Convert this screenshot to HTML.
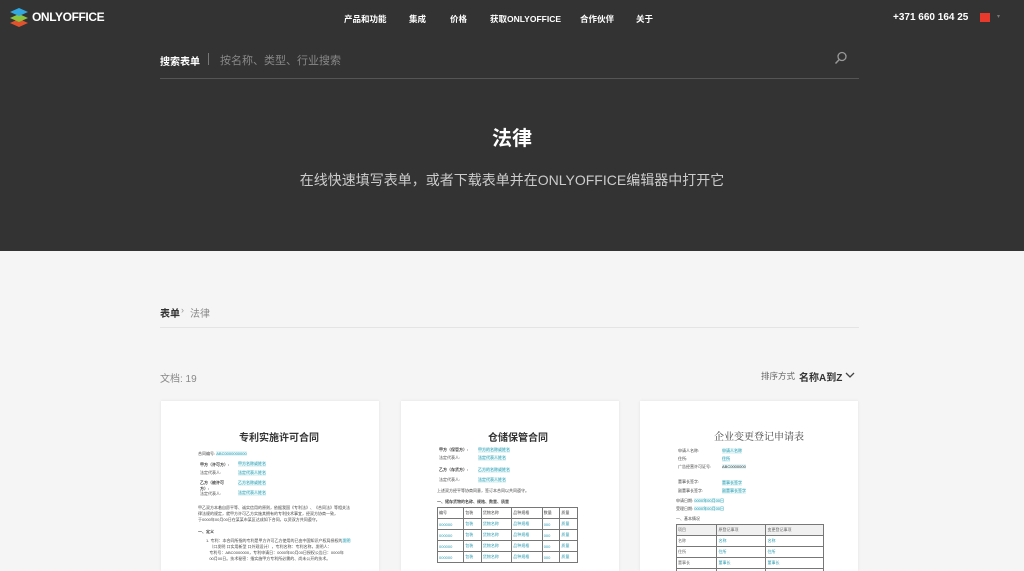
<!DOCTYPE html>
<html><head><meta charset="utf-8"><style>
*{margin:0;padding:0;box-sizing:border-box}
body{width:1024px;height:566px;overflow:hidden;background:#f5f5f5;font-family:"Liberation Sans","Noto Sans CJK SC",sans-serif;position:relative}
.hdr{position:absolute;left:0;top:0;width:1024px;height:251px;background:#333}
.a{position:absolute;white-space:nowrap}
.nav{color:#fff;font-size:8.5px;font-weight:bold;top:13px}
.card{position:absolute;top:401px;width:218px;height:170px;background:#fff;box-shadow:0 0 3px rgba(0,0,0,.08);overflow:hidden}
.t{position:absolute;white-space:nowrap;font-size:4px;color:#444}
.c{color:#2a9ab0;background:#e4f6f8}
table{position:absolute;border-collapse:collapse;font-size:4px}
td{border:0.6px solid #777;height:11px;padding:0 1px;color:#2a9ab0}
</style></head><body>
<div class="hdr"></div>
<svg class="a" style="left:9px;top:8px" width="20" height="19" viewBox="0 0 20 19"><path d="M10 11l9 4-9 4-9-4z" fill="#e2532d"/><path d="M10 6l9 4-9 4-9-4z" fill="#8bc53f"/><path d="M10 0l9 4-9 4-9-4z" fill="#33a8e0"/></svg>
<div class="a" style="left:32px;top:10px;color:#fff;font-size:12px;font-weight:bold;letter-spacing:-.4px">ONLYOFFICE</div>
<div class="a nav" style="left:344px">产品和功能</div>
<div class="a nav" style="left:409px">集成</div>
<div class="a nav" style="left:450px">价格</div>
<div class="a nav" style="left:490px">获取ONLYOFFICE</div>
<div class="a nav" style="left:580px">合作伙伴</div>
<div class="a nav" style="left:636px">关于</div>
<div class="a" style="left:893px;top:12px;color:#fff;font-size:10px;font-weight:bold">+371 660 164 25</div>
<div class="a" style="left:980px;top:13px;width:10px;height:9px;background:#e8392c"></div>
<div class="a" style="left:997px;top:13px;color:#777;font-size:6px">▾</div>
<div class="a" style="left:160px;top:53px;color:#fff;font-size:10px;font-weight:bold">搜索表单</div>
<div class="a" style="left:208px;top:53px;width:1px;height:12px;background:#777"></div>
<div class="a" style="left:220px;top:52px;color:#888;font-size:11px">按名称、类型、行业搜索</div>
<svg class="a" style="left:834px;top:51px" width="14" height="14" viewBox="0 0 14 14"><circle cx="8" cy="5.5" r="4" fill="none" stroke="#999" stroke-width="1.3"/><path d="M5.3 8.5L1.5 12.5" stroke="#999" stroke-width="1.5"/></svg>
<div class="a" style="left:160px;top:78px;width:699px;height:1px;background:#555"></div>
<div class="a" style="left:0;width:1024px;top:122px;text-align:center;color:#fff;font-size:20px;font-weight:bold">法律</div>
<div class="a" style="left:0;width:1024px;top:170px;text-align:center;color:#ccc;font-size:14px">在线快速填写表单，或者下载表单并在ONLYOFFICE编辑器中打开它</div>
<div class="a" style="left:160px;top:305px;font-size:10px;color:#333;font-weight:bold">表单</div>
<div class="a" style="left:181px;top:305px;font-size:9px;color:#999">›</div>
<div class="a" style="left:190px;top:305px;font-size:10px;color:#888">法律</div>
<div class="a" style="left:160px;top:327px;width:699px;height:1px;background:#e4e4e4"></div>
<div class="a" style="left:160px;top:370px;font-size:10px;color:#888">文档: 19</div>
<div class="a" style="left:761px;top:370px;font-size:8.5px;color:#666">排序方式</div>
<div class="a" style="left:799px;top:369px;font-size:10px;color:#333;font-weight:bold">名称A到Z</div>
<svg class="a" style="left:845px;top:372px" width="10" height="7" viewBox="0 0 10 7"><path d="M1 1l4 4 4-4" fill="none" stroke="#444" stroke-width="1.3"/></svg>

<div class="card" style="left:161px">
<div class="t" style="left:78px;top:28px;font-size:10px;font-weight:bold;color:#333">专利实施许可合同</div>
<div class="t" style="left:37px;top:50px">合同编号: <span class="c">ABC0000000000</span></div>
<div class="t" style="left:39px;top:61px;font-weight:bold">甲方（许可方）:</div><div class="t c" style="left:77px;top:60px">甲方名称或姓名</div>
<div class="t" style="left:39px;top:69px">法定代表人:</div><div class="t c" style="left:77px;top:69px">法定代表人姓名</div>
<div class="t" style="left:39px;top:79px;font-weight:bold">乙方（被许可<br>方）:</div><div class="t c" style="left:77px;top:79px">乙方名称或姓名</div>
<div class="t" style="left:39px;top:90px">法定代表人:</div><div class="t c" style="left:77px;top:89px">法定代表人姓名</div>
<div class="t" style="left:37px;top:104px;line-height:6px">甲乙双方本着自愿平等、诚实信用的原则，依据我国《专利法》、《合同法》等相关法<br>律法规的规定，就甲方许可乙方实施其拥有的专利技术事宜，经双方协商一致，<br>于0000年00月00日在某某市某区达成如下合同，以资双方共同遵守。</div>
<div class="t" style="left:37px;top:128px;font-weight:bold">一、定义</div>
<div class="t" style="left:45px;top:137px;line-height:6px">1. 专利：本合同所指的专利是甲方许可乙方使用的已由中国知识产权局授权的<span class="c">发明</span><br>&nbsp;&nbsp;&nbsp;（口发明 口实用新型 口外观设计），专利名称：专利名称，发明人：<br>&nbsp;&nbsp;&nbsp;专利号：ABC0000000，专利申请日：0000年00月00日授权公告日：0000年<br>&nbsp;&nbsp;&nbsp;00月00日。技术秘密：指实施甲方专利所必需的、尚未公开的技术。</div>
</div>

<div class="card" style="left:401px">
<div class="t" style="left:87px;top:28px;font-size:10px;font-weight:bold;color:#333">仓储保管合同</div>
<div class="t" style="left:38px;top:46px;font-weight:bold">甲方（保管方）:</div><div class="t c" style="left:77px;top:46px">甲方的名称或姓名</div>
<div class="t" style="left:38px;top:54px">法定代表人:</div><div class="t c" style="left:77px;top:54px">法定代表人姓名</div>
<div class="t" style="left:38px;top:66px;font-weight:bold">乙方（存货方）:</div><div class="t c" style="left:77px;top:66px">乙方的名称或姓名</div>
<div class="t" style="left:38px;top:76px">法定代表人:</div><div class="t c" style="left:77px;top:76px">法定代表人姓名</div>
<div class="t" style="left:36px;top:87px">上述双方经平等协商同意，签订本合同以共同遵守。</div>
<div class="t" style="left:36px;top:98px;font-weight:bold">一、储存货物的名称、规格、数量、质量</div>
<table style="left:36px;top:106px;width:141px"><tr><td style="color:#444">编号</td><td style="color:#444">包装</td><td style="color:#444">货物名称</td><td style="color:#444">品种规格</td><td style="color:#444">数量</td><td style="color:#444">质量</td></tr>
<tr><td>000000</td><td>包装</td><td>货物名称</td><td>品种规格</td><td>000</td><td>质量</td></tr>
<tr><td>000000</td><td>包装</td><td>货物名称</td><td>品种规格</td><td>000</td><td>质量</td></tr>
<tr><td>000000</td><td>包装</td><td>货物名称</td><td>品种规格</td><td>000</td><td>质量</td></tr>
<tr><td>000000</td><td>包装</td><td>货物名称</td><td>品种规格</td><td>000</td><td>质量</td></tr></table>
</div>

<div class="card" style="left:640px">
<div class="t" style="left:74px;top:27px;font-size:10px;color:#444;font-family:'Liberation Serif','Noto Serif CJK SC',serif">企业变更登记申请表</div>
<div class="t" style="left:38px;top:47px">申请人名称:</div><div class="t c" style="left:82px;top:47px">申请人名称</div>
<div class="t" style="left:38px;top:55px">住所:</div><div class="t c" style="left:82px;top:55px">住所</div>
<div class="t" style="left:38px;top:63px">广告经营许可证号:</div><div class="t c" style="left:82px;top:63px;color:#333">ABC0000000</div>
<div class="t" style="left:38px;top:78px">董事长签字:</div><div class="t c" style="left:82px;top:79px">董事长签字</div>
<div class="t" style="left:38px;top:87px">副董事长签字:</div><div class="t c" style="left:82px;top:87px">副董事长签字</div>
<div class="t" style="left:36px;top:97px">申请日期: <span class="c">0000年00月00日</span></div>
<div class="t" style="left:36px;top:105px">受理日期: <span class="c">0000年00月00日</span></div>
<div class="t" style="left:36px;top:115px">一、基本情况</div>
<table style="left:36px;top:123px;width:148px"><tr><td style="color:#666;background:#f0f0f0">项目</td><td style="color:#666;background:#f0f0f0">原登记事项</td><td style="color:#666;background:#f0f0f0">变更登记事项</td></tr>
<tr><td style="color:#666">名称</td><td>名称</td><td>名称</td></tr>
<tr><td style="color:#666">住所</td><td>住所</td><td>住所</td></tr>
<tr><td style="color:#666">董事长</td><td>董事长</td><td>董事长</td></tr>
<tr><td style="color:#666">副董事长</td><td>副董事长</td><td>副董事长</td></tr></table>
</div>
</body></html>
